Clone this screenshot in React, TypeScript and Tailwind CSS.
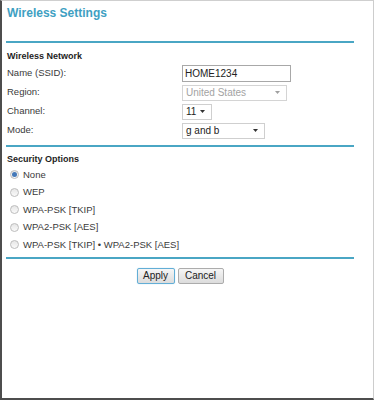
import React from 'react'

function Arrow({ muted }: { muted?: boolean }) {
  return (
    <svg width="5" height="3" viewBox="0 0 5 3" className="shrink-0">
      <polygon points="0,0 5,0 2.5,3" fill={muted ? '#a0a0a0' : '#333'} />
    </svg>
  )
}

function Select({
  value,
  width,
  disabled,
}: {
  value: string
  width: string
  disabled?: boolean
}) {
  return (
    <div
      className={`${width} h-[16px] flex items-center justify-between pl-[3px] pr-[6px] border bg-white ${
        disabled ? 'border-[#d4d4d4] text-[#a3a3a3]' : 'border-[#cfcfcf] text-[#222]'
      } text-[10px] leading-none`}
    >
      <span>{value}</span>
      <Arrow muted={disabled} />
    </div>
  )
}

function Radio({ checked, label }: { checked?: boolean; label: string }) {
  return (
    <div className="h-[17.5px] flex items-center gap-[4px] pl-[3px]">
      <span className="w-[9px] h-[9px] rounded-full border border-[#bdbdbd] bg-gradient-to-b from-[#e6e6e6] to-[#fafafa] flex items-center justify-center">
        {checked && <span className="w-[5px] h-[5px] rounded-full bg-[#4479b9]" />}
      </span>
      <span>{label}</span>
    </div>
  )
}

const rule = 'h-[2px] w-[348px] -ml-[1px] bg-[#4aa6c4]'

export default function App() {
  const rows: { label: string; field: React.ReactNode }[] = [
    {
      label: 'Name (SSID):',
      field: (
        <div className="w-[109px] h-[17px] flex items-center pl-[2px] border border-[#a8a8a8] bg-white text-[10px] text-[#222] leading-none">
          HOME1234
        </div>
      ),
    },
    { label: 'Region:', field: <Select value="United States" width="w-[105px]" disabled /> },
    { label: 'Channel:', field: <Select value="11" width="w-[30px]" /> },
    { label: 'Mode:', field: <Select value="g and b" width="w-[83px]" /> },
  ]

  return (
    <div
      className="w-[376px] h-[400px] bg-white"
      style={{ fontFamily: '"Liberation Sans", Arial, sans-serif' }}
    >
      <div className="w-[374px] h-[400px] border-l-2 border-l-[#4d4d4d] border-t border-t-[#cfcfcf] border-r border-r-[#cdcdcd] border-b-2 border-b-[#4d4d4d] pl-[5px]">
        <div className="h-[40px] pt-[4px]">
          <h1 className="text-[12px] leading-[16px] font-bold text-[#3ea0c2]">
            Wireless Settings
          </h1>
        </div>
        <div className={rule} />

        <h2 className="mt-[7px] text-[9px] leading-[12px] font-bold text-[#1e1e1e]">
          Wireless Network
        </h2>
        <div className="mt-[2px] text-[9.5px] text-[#3a3a3a]">
          {rows.map(({ label, field }) => (
            <div key={label} className="h-[19px] grid grid-cols-[175px_1fr] items-center">
              <span>{label}</span>
              {field}
            </div>
          ))}
        </div>
        <div className={`${rule} mt-[5px]`} />

        <h2 className="mt-[6px] text-[9px] leading-[12px] font-bold text-[#1e1e1e]">
          Security Options
        </h2>
        <div className="mt-[1px] text-[9.5px] text-[#3a3a3a]">
          <Radio checked label="None" />
          <Radio label="WEP" />
          <Radio label="WPA-PSK [TKIP]" />
          <Radio label="WPA2-PSK [AES]" />
          <Radio label="WPA-PSK [TKIP] • WPA2-PSK [AES]" />
        </div>
        <div className={`${rule} mt-[3px]`} />

        <div className="w-[348px] -ml-[1px] mt-[9px] flex justify-center gap-[3px] text-[10px] text-[#222]">
          <button className="w-[38px] h-[16px] leading-none border border-[#63aed6] rounded-[2px] bg-gradient-to-b from-[#f6f6f6] to-[#dcdcdc] shadow-[0_0_1px_#8cc6e6]">
            Apply
          </button>
          <button className="w-[46px] h-[16px] leading-none border border-[#acacac] rounded-[2px] bg-gradient-to-b from-[#f6f6f6] to-[#dcdcdc]">
            Cancel
          </button>
        </div>
      </div>
    </div>
  )
}
